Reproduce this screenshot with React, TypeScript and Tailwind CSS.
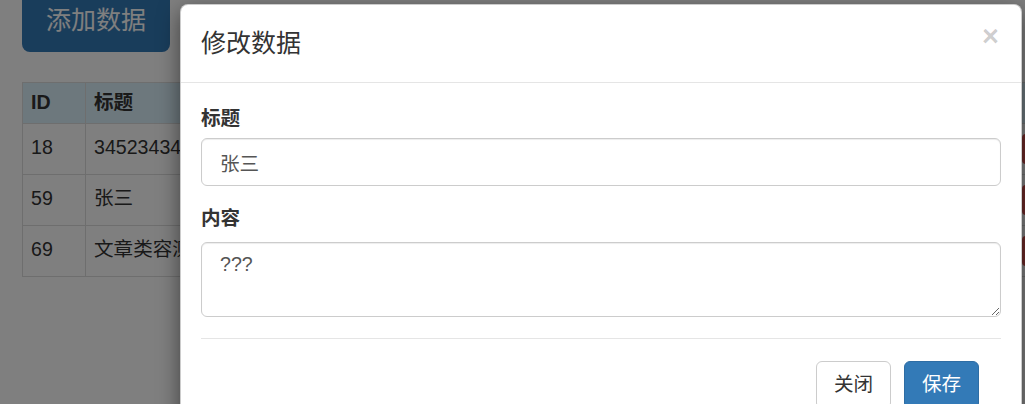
import React from 'react';

const rows = [
  { id: 18, title: '34523434', content: '' },
  { id: 59, title: '张三', content: '???' },
  { id: 69, title: '文章类容测试', content: '' },
];

const font = "font-['Liberation_Sans','Noto_Sans_CJK_SC',sans-serif]";

export default function App() {
  const [title, setTitle] = React.useState('张三');
  const [content, setContent] = React.useState('???');

  return (
    <div className={`relative h-[404px] w-[1025px] overflow-hidden bg-white text-[#333] ${font}`}>
      {/* page behind the modal */}
      <div className="pl-[22px]">
        <button className="-mt-[10px] flex h-[62px] w-[148px] items-center justify-center rounded-[8px] bg-[#337ab7] text-[25px] text-white">
          添加数据
        </button>

        <div className="mt-[30px] w-[1080px] border border-[#ddd] text-[19.6px]">
          <div className="grid h-[40px] grid-cols-[63px_300px_625px_1fr] bg-[#dbf0fa] font-bold">
            <div className="flex items-center border-r border-[#ddd] px-[8px]">ID</div>
            <div className="flex items-center border-r border-[#ddd] px-[8px]">标题</div>
            <div className="flex items-center border-r border-[#ddd] px-[8px]">内容</div>
            <div />
          </div>
          {rows.map(row => (
            <div key={row.id} className="grid h-[51px] grid-cols-[63px_300px_625px_1fr] border-t border-[#ddd]">
              <div className="border-r border-[#ddd] px-[8px] pt-[9px]">{row.id}</div>
              <div className="border-r border-[#ddd] px-[8px] pt-[9px]">{row.title}</div>
              <div className="border-r border-[#ddd] px-[8px] pt-[9px]">{row.content}</div>
              <div className="flex items-center pl-[11px]">
                <span className="h-[30px] w-[60px] rounded-[4px] bg-[#d9534f]" />
              </div>
            </div>
          ))}
        </div>
      </div>

      {/* backdrop */}
      <div className="absolute inset-0 bg-black/50" />

      {/* modal */}
      <div className="absolute left-[180px] top-[4px] w-[842px] rounded-[8px] border border-black/20 bg-white shadow-[0_7px_21px_rgba(0,0,0,0.5)]">
        <div className="flex h-[78px] items-center justify-between border-b border-[#e5e5e5] px-[20px]">
          <h4 className="text-[25px] leading-none">修改数据</h4>
          <span className="-mt-[14px] mr-[2px] text-[29px] font-bold leading-none text-black/20">×</span>
        </div>

        <div className="px-[20px] pt-[21px]">
          <label className="block text-[19.6px] font-bold leading-[28px]">标题</label>
          <input
            value={title}
            onChange={e => setTitle(e.target.value)}
            className="mt-[6px] block h-[48px] w-full rounded-[6px] border border-[#ccc] px-[18px] text-[19.6px] text-[#555] shadow-[inset_0_1px_1px_rgba(0,0,0,0.075)] outline-none"
          />

          <label className="mt-[18px] block text-[19.6px] font-bold leading-[28px]">内容</label>
          <textarea
            value={content}
            onChange={e => setContent(e.target.value)}
            className="mt-[10px] block h-[75px] w-full rounded-[6px] border border-[#ccc] px-[18px] py-[7px] text-[19.6px] leading-[28px] text-[#555] shadow-[inset_0_1px_1px_rgba(0,0,0,0.075)] outline-none"
          />

          <hr className="mt-[21px] border-t border-[#e5e5e5]" />

          <div className="flex justify-end gap-[13px] pr-[22px] pt-[22px] pb-[20px]">
            <button className="h-[48px] w-[75px] rounded-[6px] border border-[#ccc] bg-white text-[19.6px] text-[#333]">
              关闭
            </button>
            <button className="h-[48px] w-[75px] rounded-[6px] border border-[#2e6da4] bg-[#337ab7] text-[19.6px] text-white">
              保存
            </button>
          </div>
        </div>
      </div>
    </div>
  );
}
